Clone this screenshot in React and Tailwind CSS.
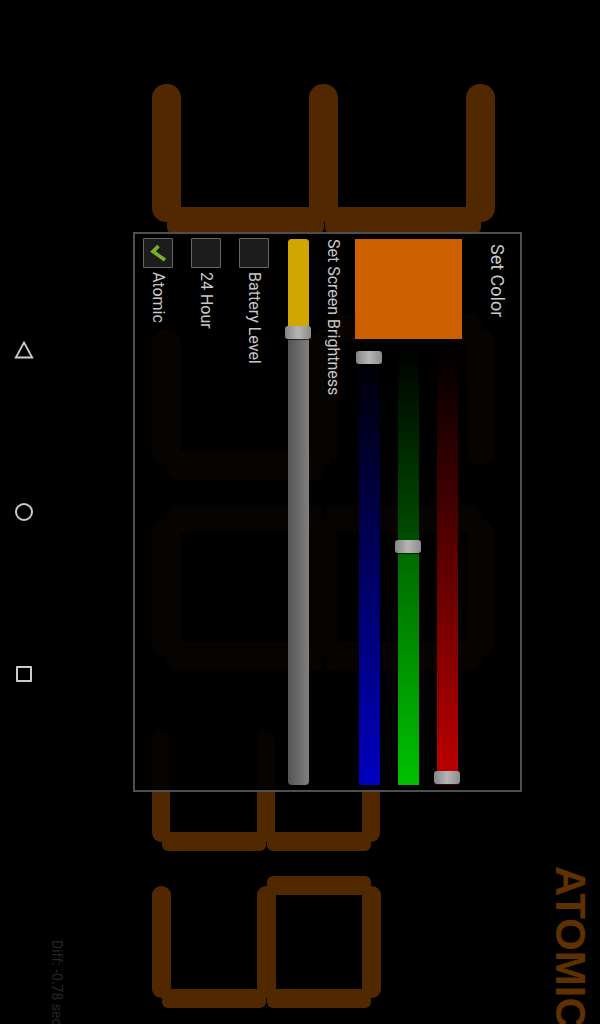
import React from 'react';

const SEGMENT = '#522800';

// vertical and horizontal bars of the clock digits: [x, y, w, h, radius]
const segments = [
  // row 1
  [152, 84, 29, 138, 14], [309, 84, 29, 138, 14], [466, 84, 29, 138, 14],
  [167, 207, 157, 29, 9], [325, 207, 156, 29, 9],
  // row 2
  [152, 329, 29, 136, 14], [310, 329, 28, 136, 14], [467, 329, 28, 136, 14],
  [325, 314, 156, 28, 9], [167, 452, 156, 28, 9],
  // row 3
  [152, 520, 29, 136, 14], [310, 520, 28, 136, 14], [467, 520, 28, 136, 14],
  [167, 505, 156, 28, 9], [325, 505, 156, 28, 9],
  [167, 642, 156, 29, 9], [325, 642, 156, 29, 9],
  // row 4
  [152, 730, 18, 112, 9], [257, 730, 18, 112, 9], [362, 730, 18, 112, 9],
  [162, 832, 104, 19, 6], [267, 832, 104, 19, 6],
  // row 5
  [152, 886, 19, 112, 9], [257, 886, 19, 112, 9], [362, 886, 19, 112, 9],
  [267, 876, 104, 19, 6], [162, 989, 104, 19, 6], [267, 989, 104, 19, 6],
];

const Thumb = ({ className }) => (
  <div
    className={`absolute -left-[3px] w-[26px] h-[13px] rounded-[3px] bg-linear-to-r/srgb from-[#858585] via-[#b5b5b5] to-[#8c8c8c] shadow-[0_1px_1px_rgba(0,0,0,0.7)] ${className}`}
  />
);

const CheckRow = ({ label, checked }) => (
  <div className="flex flex-col w-[30px] items-center">
    <div className="w-[30px] h-[30px] border border-[#666] rounded-[1px] bg-[#1c1c1c] flex items-center justify-center">
      {checked && (
        <svg width="28" height="28" viewBox="0 0 28 28" fill="none">
          <path d="M14.5 7 L9 12.5 L21 21" stroke="#78b21c" strokeWidth="3.6" />
        </svg>
      )}
    </div>
    <span className="mt-[4px] text-[16px] leading-[18px] text-[#c8c8c8] [writing-mode:vertical-rl]">{label}</span>
  </div>
);

const App = () => {
  return (
    <div className="relative flex w-[600px] h-[1024px] overflow-hidden bg-black font-['Roboto',sans-serif]">
      {/* Clock digits */}
      <svg className="absolute inset-0" width="600" height="1024" viewBox="0 0 600 1024">
        {segments.map(([x, y, w, h, r], i) => (
          <rect key={i} x={x} y={y} width={w} height={h} rx={r} fill={SEGMENT} />
        ))}
      </svg>

      <div className="absolute left-[50px] top-[940px] text-[14px] leading-[14px] whitespace-nowrap text-[#262626] [writing-mode:vertical-rl]">
        Diff: -0.78 sec
      </div>
      <div className="absolute left-[549px] top-[866px] text-[42px] leading-[42px] font-bold whitespace-nowrap text-[#5f3000] font-['Liberation_Sans',sans-serif] [writing-mode:vertical-rl]">
        ATOMIC
      </div>

      {/* Navigation bar */}
      <nav className="relative w-12 h-full flex flex-col items-center justify-center">
        <div className="h-[162px] flex items-center justify-center">
          <svg width="20" height="18" viewBox="0 0 20 18" fill="none">
            <path d="M10 1.5 L18.2 16.5 H1.8 Z" stroke="#cccccc" strokeWidth="1.8" />
          </svg>
        </div>
        <div className="h-[162px] flex items-center justify-center">
          <div className="w-[18px] h-[18px] rounded-full border-2 border-[#cccccc]" />
        </div>
        <div className="h-[162px] flex items-center justify-center">
          <div className="w-[16px] h-[16px] rounded-[1px] border-2 border-[#cccccc]" />
        </div>
      </nav>

      {/* Settings dialog */}
      <div className="absolute left-[133px] top-[232px] w-[389px] h-[560px] flex border-2 border-[#4f4f4f] bg-black/92 pl-[8px] pt-[4px]">
        <div className="flex gap-[18px]">
          <CheckRow label="Atomic" checked />
          <CheckRow label="24 Hour" />
          <CheckRow label="Battery Level" />
        </div>

        {/* Brightness */}
        <div className="relative ml-[19px] mt-[1px] w-[21px] h-[546px] rounded-[4px] bg-linear-to-r/srgb from-[#555] to-[#808080]">
          <div className="h-[90px] rounded-t-[4px] bg-[#d0a600]" />
          <Thumb className="top-[87px]" />
        </div>
        <span className="ml-[15px] mt-[1px] w-[18px] text-[16px] leading-[18px] text-[#c8c8c8] [writing-mode:vertical-rl]">Set Screen Brightness</span>

        {/* Colour */}
        <div className="ml-[13px] mt-[1px] w-[107px] flex flex-col">
          <div className="h-[100px] bg-[#cc6000]" />
          <div className="mt-[12px] pl-[4px] flex gap-[18px]">
            <div className="relative w-[21px] h-[434px] bg-linear-to-b/srgb from-black to-[#0000c0]">
              <Thumb className="top-0" />
            </div>
            <div className="relative w-[21px] h-[434px] flex flex-col">
              <div className="h-[195px] bg-linear-to-b/srgb from-black to-[#005000]" />
              <div className="flex-1 bg-linear-to-b/srgb from-[#006800] to-[#00c000]" />
              <Thumb className="top-[189px]" />
            </div>
            <div className="relative w-[21px] h-[434px] bg-linear-to-b/srgb from-black to-[#c00000]">
              <Thumb className="top-[420px]" />
            </div>
          </div>
        </div>

        <span className="ml-[25px] mt-[6px] text-[18px] leading-[20px] text-[#c8c8c8] [writing-mode:vertical-rl]">Set Color</span>
      </div>
    </div>
  );
};

export default App;
